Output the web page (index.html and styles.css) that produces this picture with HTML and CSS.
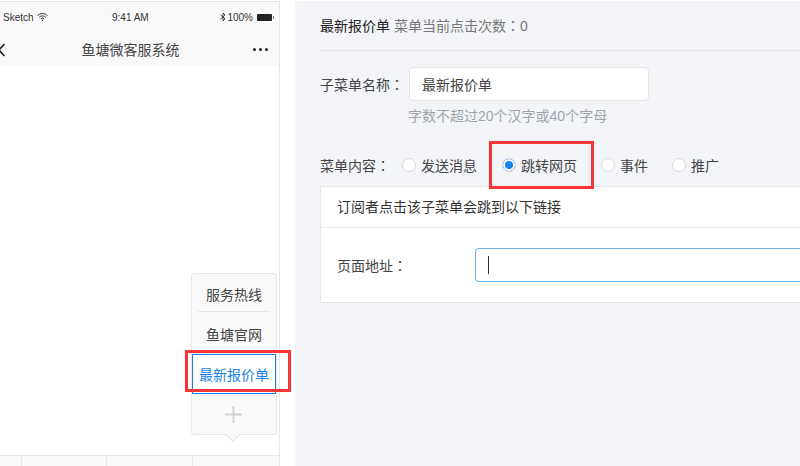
FILE: index.html
```html
<!DOCTYPE html>
<html lang="en">
<head>
  <meta charset="UTF-8" />
  <title>菜单设置</title>
  <link rel="stylesheet" href="styles.css">
</head>
<body>

<div class="page">
  <div class="phone-col">
    <div class="phone">
      <div class="status">
        <span class="carrier">Sketch
          <svg class="wifi" width="11" height="8" viewBox="0 0 11 8"><path d="M.5 2.6a7 7 0 0 1 10 0M2.2 4.3a4.6 4.6 0 0 1 6.6 0M3.8 5.9a2.3 2.3 0 0 1 3.4 0" fill="none" stroke="#333" stroke-width="1"/><circle cx="5.5" cy="7.2" r=".8" fill="#333"/></svg>
        </span>
        <span class="time">9:41 AM</span>
        <span class="battery">
          <svg width="6" height="10" viewBox="0 0 6 10"><path d="M.5 2.7 5 6.9 3 9V1l2 2.1L.5 7.3" fill="none" stroke="#333" stroke-width=".9"/></svg>
          100%
          <span class="batt-body"></span>
        </span>
      </div>
      <div class="navbar">
        <svg class="back" width="8" height="14" viewBox="0 0 8 14"><path d="M6.5 1 .8 7l5.7 6" fill="none" stroke="#222" stroke-width="1.6"/></svg>
        <span class="nav-title">鱼塘微客服系统</span>
        <span class="dots"><i></i><i></i><i></i></span>
      </div>
      <div class="phone-body">
        <div class="popup">
          <div class="popup-item first">服务热线</div>
          <div class="popup-item second">鱼塘官网</div>
          <div class="popup-item active">最新报价单</div>
          <div class="popup-add">
            <svg width="17" height="17" viewBox="0 0 17 17"><path d="M8.5 0v17M0 8.5h17" stroke="#d2d2d2" stroke-width="2"/></svg>
          </div>
        </div>
      </div>
      <div class="tabbar"><span class="tab-a"></span><span class="tab-b"></span><span class="tab-c"></span></div>
    </div>
    <div class="red-box red-menu"></div>
  </div>

  <div class="main">
    <div class="head"><strong>最新报价单</strong> <span>菜单当前点击次数<span class="colon">：</span>0</span></div>

    <div class="name-row">
      <label>子菜单名称<span class="colon">：</span></label>
      <div class="name-input">最新报价单</div>
    </div>
    <div class="hint">字数不超过20个汉字或40个字母</div>

    <div class="radio-row">
      <label>菜单内容<span class="colon">：</span></label>
      <span class="radio r1"><i></i>发送消息</span>
      <span class="radio r2 checked"><i></i>跳转网页</span>
      <span class="radio r3"><i></i>事件</span>
      <span class="radio r4"><i></i>推广</span>
    </div>

    <div class="panel">
      <div class="panel-head">订阅者点击该子菜单会跳到以下链接</div>
      <div class="panel-body">
        <label>页面地址<span class="colon">：</span></label>
        <div class="url-input"><span class="caret"></span></div>
      </div>
    </div>
    <div class="red-box red-radio"></div>
  </div>
</div>

</body>
</html>
```

FILE: styles.css
```css
body {
  margin: 0;
  font-family: "Liberation Sans", "Noto Sans CJK SC", sans-serif;
  font-size: 14px;
  color: #444;
  background: #f2f4f8;
  overflow: hidden;
}
.page {
  display: flex;
  width: 800px;
  height: 466px;
  overflow: hidden;
}
.colon { font-family: "Noto Sans CJK TC", sans-serif; }

/* phone preview */
.phone-col {
  position: relative;
  width: 295px;
  flex: none;
  background: #fff;
}
.phone {
  display: flex;
  flex-direction: column;
  box-sizing: border-box;
  width: 280px;
  height: 465px;
  margin-top: 1px;
  border-top: 1px solid #e7e7e7;
  border-right: 1px solid #e7e7e7;
}
.status {
  display: flex;
  align-items: center;
  height: 30px;
  padding: 0 7px 0 3px;
  background: #f9f9f9;
  font-size: 10px;
  color: #333;
}
.carrier {
  display: flex;
  align-items: center;
  gap: 3px;
  width: 109px;
}
.battery {
  display: flex;
  align-items: center;
  gap: 1px;
  margin-left: auto;
}
.batt-body {
  position: relative;
  width: 15px;
  height: 7px;
  margin-left: 3px;
  background: #222;
  border-radius: 1px;
}
.batt-body::after {
  content: "";
  position: absolute;
  right: -2px;
  top: 2px;
  width: 1px;
  height: 3px;
  background: #777;
}
.navbar {
  display: flex;
  justify-content: center;
  align-items: center;
  position: relative;
  height: 34px;
  padding-right: 18px;
  box-sizing: border-box;
  background: #f9f9f9;
}
.back { position: absolute; left: -2px; top: 11px; }
.nav-title { font-size: 14px; color: #444; }
.dots { position: absolute; right: 11px; top: 16px; display: flex; gap: 3px; }
.dots i { width: 3px; height: 3px; border-radius: 50%; background: #222; }
.phone-body {
  flex: 1;
  display: flex;
  justify-content: flex-end;
  align-items: flex-start;
  padding: 207px 2px 0 0;
}
.popup {
  position: relative;
  width: 86px;
  height: 162px;
  box-sizing: border-box;
  border: 1px solid #e7e7e7;
  border-radius: 3px;
  background: #fafafa;
  font-size: 14px;
  text-align: center;
}
.popup::after {
  content: "";
  position: absolute;
  left: 36px;
  bottom: -6px;
  width: 10px;
  height: 10px;
  box-sizing: border-box;
  background: #fafafa;
  border-right: 1px solid #e7e7e7;
  border-bottom: 1px solid #e7e7e7;
  transform: rotate(45deg);
}
.popup-item.first {
  height: 38px;
  line-height: 42px;
  box-sizing: border-box;
  margin: 0 6px;
  border-bottom: 1px solid #e7e7e7;
}
.popup-item.second {
  height: 42px;
  line-height: 46px;
}
.popup-item.active {
  height: 38px;
  line-height: 40px;
  border: 1px solid #1a82e8;
  color: #1a82e8;
  background: #fff;
}
.popup-add {
  display: flex;
  justify-content: center;
  padding: 12px 2px 0 0;
}

.tabbar {
  display: flex;
  height: 10px;
  border-top: 1px solid #e7e7e7;
  background: #f9f9f9;
}
.tabbar span { border-right: 1px solid #e7e7e7; }
.tab-a { width: 21px; }
.tab-b { width: 84px; }
.tab-c { width: 85px; }

.red-box {
  position: absolute;
  border: 3px solid #f93535;
  box-sizing: border-box;
}
.red-menu { left: 185px; top: 350px; width: 106px; height: 42px; }

/* right form */
.main {
  position: relative;
  flex: 1;
  min-width: 0;
  padding-left: 25px;
  border-top: 1px solid #fff;
}
.head {
  height: 49px;
  line-height: 48px;
  border-bottom: 1px solid #e2e4e8;
  color: #777;
}
.head strong { font-weight: normal; color: #222; }
.name-row {
  display: flex;
  align-items: center;
  margin-top: 16px;
}
.name-row label { width: 89px; }
.name-input {
  width: 240px;
  height: 34px;
  line-height: 34px;
  box-sizing: border-box;
  padding-left: 12px;
  background: #fff;
  border: 1px solid #e4e6ea;
  border-radius: 4px;
}
.hint {
  margin: 6px 0 0 88px;
  line-height: 18px;
  color: #a0a4aa;
}
.radio-row {
  display: flex;
  align-items: center;
  height: 20px;
  margin-top: 30px;
}
.radio-row label { width: 82px; }
.radio { display: flex; align-items: center; gap: 5px; }
.r1 { width: 100px; }
.r2 { width: 99px; }
.r3 { width: 71px; }
.radio i {
  width: 12px;
  height: 12px;
  background: #fff;
  border: 1px solid #d6d8dc;
  border-radius: 50%;
}
.radio.checked i {
  background: #1682ee;
  box-shadow: inset 0 0 0 2px #fff;
}
.panel {
  margin-top: 11px;
  width: 500px;
  box-sizing: border-box;
  height: 117px;
  background: #fff;
  border: 1px solid #e4e6ea;
}
.panel-head {
  height: 40px;
  line-height: 40px;
  padding-left: 16px;
  border-bottom: 1px solid #e4e6ea;
  color: #333;
}
.panel-body {
  display: flex;
  align-items: center;
  padding: 20px 0 0 16px;
}
.panel-body label { width: 138px; }
.url-input {
  flex: 1;
  display: flex;
  align-items: center;
  height: 34px;
  box-sizing: border-box;
  padding-left: 12px;
  border: 1px solid #6db0ee;
  border-right: none;
  border-radius: 4px 0 0 4px;
}
.caret { width: 1px; height: 18px; background: #333; }
.red-radio { left: 194px; top: 140px; width: 105px; height: 48px; }
```
